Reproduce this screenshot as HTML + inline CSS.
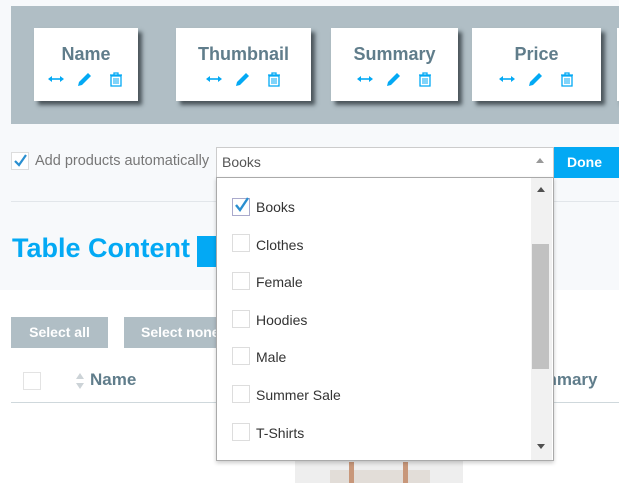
<!DOCTYPE html>
<html><head><style>
*{margin:0;padding:0;box-sizing:border-box}
body{width:619px;height:483px;overflow:hidden;background:#fff;font-family:"Liberation Sans",Arial,sans-serif;position:relative}
.abs{position:absolute}
.card{position:absolute;top:28px;height:73px;background:#fff;box-shadow:4px 4px 4px rgba(40,50,55,.75);text-align:center}
.card b{display:block;margin-top:16px;font-size:18px;color:#607d8b}
.cb{position:absolute;width:18px;height:18px;border:1px solid #ddd;background:#fff}
.item{position:absolute;left:256px;font-size:14px;color:#333}
</style></head><body>
<div class="abs" style="left:0;top:0;width:619px;height:290px;background:#f7f9fb"></div>
<div class="abs" style="left:11px;top:6px;width:608px;height:118px;background:#b0bec5"></div>
<svg width="0" height="0" style="position:absolute"><defs>
<g id="ic">
<path d="M2 8h12" stroke="#03a9f4" stroke-width="1.6"/>
<path d="M0 8l4-3v6zM16 8l-4-3v6z" fill="#03a9f4"/>
<path d="M30 15l1-4 9-9 3 3-9 9z" fill="#03a9f4"/>
<path d="M62 4h12M66 4V2h4v2M63 5h10v10H63z" stroke="#03a9f4" stroke-width="1.3" fill="none"/>
<path d="M66 7v6M68 7v6M70 7v6" stroke="#03a9f4" stroke-width="1"/>
</g></defs></svg>
<div class="card" style="left:34px;width:104px"><b>Name</b><svg width="76" height="16" style="margin-top:6px"><use href="#ic"/></svg></div>
<div class="card" style="left:176px;width:135px"><b>Thumbnail</b><svg width="76" height="16" style="margin-top:6px"><use href="#ic"/></svg></div>
<div class="card" style="left:331px;width:127px"><b>Summary</b><svg width="76" height="16" style="margin-top:6px"><use href="#ic"/></svg></div>
<div class="card" style="left:472px;width:129px"><b>Price</b><svg width="76" height="16" style="margin-top:6px"><use href="#ic"/></svg></div>
<div class="card" style="left:617px;width:20px"></div>

<div class="cb" style="left:11px;top:152px;border-color:#ddd"></div>
<svg class="abs" style="left:12px;top:153px" width="16" height="16"><path d="M3 8l4 4 7-10" stroke="#2a8fd0" stroke-width="2.2" fill="none"/></svg>
<div class="abs" style="left:35px;top:153px;font-size:14.5px;color:#777">Add products automatically</div>
<div class="abs" style="left:216px;top:147px;width:338px;height:31px;border:1px solid #ccc;background:#fff"></div>
<div class="abs" style="left:222px;top:154px;font-size:14px;color:#555">Books</div>
<div class="abs" style="left:536px;top:158px;width:0;height:0;border-left:4px solid transparent;border-right:4px solid transparent;border-bottom:5px solid #999"></div>
<div class="abs" style="left:554px;top:147px;width:65px;height:31px;background:#03a9f4;color:#fff;font-weight:bold;font-size:14px;line-height:31px;padding-left:13px">Done</div>

<div class="abs" style="left:11px;top:201px;width:608px;height:1px;background:#e2e6ea"></div>
<div class="abs" style="left:12px;top:233px;font-size:27px;font-weight:bold;color:#03a9f4">Table Content</div>
<div class="abs" style="left:197px;top:236px;width:30px;height:31px;background:#03a9f4"></div>

<div class="abs" style="left:11px;top:317px;width:97px;height:31px;background:#b0bec5;color:#fff;font-weight:bold;font-size:14px;line-height:31px;text-align:center">Select all</div>
<div class="abs" style="left:124px;top:317px;width:100px;height:31px;background:#b0bec5;color:#fff;font-weight:bold;font-size:14px;line-height:31px;padding-left:17px">Select none</div>
<div class="cb" style="left:23px;top:372px;border-color:#e3e3e3"></div>
<svg class="abs" style="left:75px;top:372px" width="10" height="18"><path d="M1 7l4-6 4 6zM1 11l4 6 4-6z" fill="#ccd3d7"/></svg>
<div class="abs" style="left:90px;top:370px;font-size:17px;font-weight:bold;color:#607d8b">Name</div>
<div class="abs" style="left:520px;top:370px;font-size:17px;font-weight:bold;color:#607d8b">Summary</div>
<div class="abs" style="left:11px;top:402px;width:608px;height:1px;background:#cfd8dc"></div>
<div class="abs" style="left:295px;top:460px;width:168px;height:23px;background:#eeeeee"></div>
<div class="abs" style="left:330px;top:470px;width:100px;height:13px;background:#e2ddd8"></div>
<div class="abs" style="left:349px;top:462px;width:5px;height:21px;background:#c8977a"></div>
<div class="abs" style="left:403px;top:462px;width:5px;height:21px;background:#c8977a"></div>

<div class="abs" style="left:216px;top:177px;width:338px;height:284px;background:#fff;border:1px solid #aaa;box-shadow:0 2px 4px rgba(0,0,0,.2)"></div>
<div class="abs" style="left:531px;top:178px;width:21px;height:282px;background:#f1f1f1"></div>
<div class="abs" style="left:532px;top:244px;width:17px;height:125px;background:#c1c1c1"></div>
<div class="abs" style="left:537px;top:187px;border-left:4px solid transparent;border-right:4px solid transparent;border-bottom:5px solid #505050"></div>
<div class="abs" style="left:537px;top:444px;border-left:4px solid transparent;border-right:4px solid transparent;border-top:5px solid #505050"></div>

<div class="cb" style="left:232px;top:198px;border-color:#aac"></div>
<svg class="abs" style="left:233px;top:196px" width="18" height="18"><path d="M3 9l4 5 8-12" stroke="#2a8fd0" stroke-width="2.4" fill="none"/></svg>
<div class="item" style="top:199px">Books</div>
<div class="cb" style="left:232px;top:234px"></div><div class="item" style="top:237px">Clothes</div>
<div class="cb" style="left:232px;top:272px"></div><div class="item" style="top:274px">Female</div>
<div class="cb" style="left:232px;top:310px"></div><div class="item" style="top:312px">Hoodies</div>
<div class="cb" style="left:232px;top:347px"></div><div class="item" style="top:349px">Male</div>
<div class="cb" style="left:232px;top:385px"></div><div class="item" style="top:387px">Summer Sale</div>
<div class="cb" style="left:232px;top:423px"></div><div class="item" style="top:425px">T-Shirts</div>
</body></html>
